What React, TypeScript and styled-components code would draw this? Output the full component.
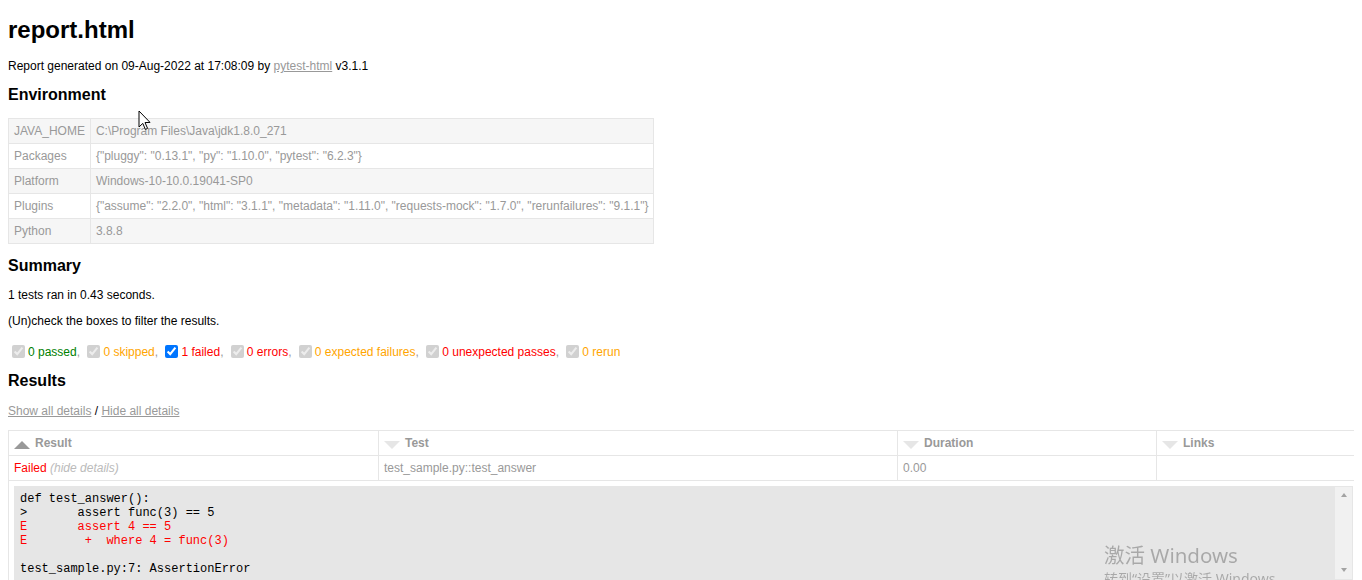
import React from 'react';
import styled, { createGlobalStyle } from 'styled-components';

const GlobalStyle = createGlobalStyle`
  html, body { background: #ffffff; }
  body {
    margin: 0 8px 8px 8px;
    font-family: "Liberation Sans", Arial, Helvetica, sans-serif;
    font-size: 12px;
    min-width: 800px;
    color: #999;
  }
`;

const Title = styled.h1`
  font-size: 24px;
  font-weight: bold;
  color: black;
  margin: 16px 0 15px 0;
`;

const SectionTitle = styled.h2<{ $tight?: boolean }>`
  font-size: 16px;
  font-weight: bold;
  color: black;
  margin: ${(p) => (p.$tight ? '11.3px' : '13.3px')} 0 13.3px 0;
`;

const Para = styled.p`
  color: black;
  margin: 12px 0;
`;

const Link = styled.a`
  color: #999;
  text-decoration: underline;
`;

const EnvTable = styled.table`
  border-collapse: collapse;
  font-size: 12px;
`;

const EnvRow = styled.tr<{ $shaded: boolean }>`
  background-color: ${(p) => (p.$shaded ? '#f6f6f6' : 'transparent')};
`;

const EnvCell = styled.td`
  padding: 5px;
  border: 1px solid #e6e6e6;
  color: #999;
`;

const FilterRow = styled.div`
  padding-top: 2px;
`;

const FilterBox = styled.input`
  margin: 3px 3px 3px 4px;
  width: 13px;
  height: 13px;
  vertical-align: -2px;
`;

const Outcome = styled.span<{ $tone: 'green' | 'orange' | 'red' }>`
  color: ${(p) => p.$tone};
`;

const ResultsTable = styled.table`
  border-collapse: collapse;
  border: 1px solid #e6e6e6;
  color: #999;
  font-size: 12px;
  width: 1350px;
  table-layout: fixed;
`;

const HeadCell = styled.th`
  padding: 5px;
  border: 1px solid #e6e6e6;
  text-align: left;
  font-weight: bold;
  cursor: pointer;
`;

const SortIcon = styled.div<{ $active: boolean }>`
  float: left;
  margin-right: 5px;
  margin-top: 5px;
  width: 0;
  height: 0;
  border-left: 8px solid transparent;
  border-right: 8px solid transparent;
  ${(p) =>
    p.$active ? 'border-bottom: 8px solid #999;' : 'border-top: 8px solid #e6e6e6;'}
`;

const Cell = styled.td`
  padding: 5px;
  border: 1px solid #e6e6e6;
  text-align: left;
  vertical-align: top;
`;

const FailedText = styled.span`
  color: red;
`;

const Collapser = styled.span`
  color: #bbb;
  font-style: italic;
  cursor: pointer;
`;

const LogFrame = styled.div`
  position: relative;
`;

const Log = styled.div`
  background-color: #e6e6e6;
  border: 1px solid #e6e6e6;
  color: black;
  display: block;
  font-family: "Liberation Mono", "Courier New", Courier, monospace;
  font-size: 12px;
  height: 82px;
  overflow-y: scroll;
  padding: 5px 22px 5px 5px;
  white-space: pre-wrap;
`;

const ScrollBar = styled.div`
  position: absolute;
  top: 1px;
  right: 1px;
  bottom: 1px;
  width: 17px;
  background: #f1f1f1;
  display: flex;
  flex-direction: column;
  justify-content: space-between;
  align-items: center;
  pointer-events: none;
`;

const ScrollButton = styled.div`
  height: 17px;
  width: 17px;
  display: flex;
  align-items: center;
  justify-content: center;
`;

const Arrow = styled.div<{ $up: boolean }>`
  width: 0;
  height: 0;
  border-left: 3.5px solid transparent;
  border-right: 3.5px solid transparent;
  ${(p) =>
    p.$up ? 'border-bottom: 4px solid #a3a3a3;' : 'border-top: 4px solid #a3a3a3;'}
`;

const ErrorLine = styled.span`
  color: red;
`;

const Cursor = styled.svg`
  position: absolute;
  left: 138px;
  top: 110px;
  pointer-events: none;
`;

const Watermark = styled.div`
  position: fixed;
  left: 1104px;
  top: 543px;
  color: rgba(0, 0, 0, 0.27);
  font-family: "Noto Sans", "Noto Sans CJK SC", sans-serif;
  pointer-events: none;
  line-height: 1.2;
`;

const WatermarkMain = styled.div`
  font-size: 20.5px;
`;

const WatermarkSub = styled.div`
  font-size: 14px;
  margin-top: 3px;
`;

const envRows: [string, string][] = [
  ['JAVA_HOME', 'C:\\Program Files\\Java\\jdk1.8.0_271'],
  ['Packages', '{"pluggy": "0.13.1", "py": "1.10.0", "pytest": "6.2.3"}'],
  ['Platform', 'Windows-10-10.0.19041-SP0'],
  [
    'Plugins',
    '{"assume": "2.2.0", "html": "3.1.1", "metadata": "1.11.0", "requests-mock": "1.7.0", "rerunfailures": "9.1.1"}',
  ],
  ['Python', '3.8.8'],
];

type Tone = 'green' | 'orange' | 'red';
const filters: { label: string; tone: Tone; enabled: boolean }[] = [
  { label: '0 passed', tone: 'green', enabled: false },
  { label: '0 skipped', tone: 'orange', enabled: false },
  { label: '1 failed', tone: 'red', enabled: true },
  { label: '0 errors', tone: 'red', enabled: false },
  { label: '0 expected failures', tone: 'orange', enabled: false },
  { label: '0 unexpected passes', tone: 'red', enabled: false },
  { label: '0 rerun', tone: 'orange', enabled: false },
];

const columns: { name: string; width: number; active: boolean }[] = [
  { name: 'Result', width: 370, active: true },
  { name: 'Test', width: 519, active: false },
  { name: 'Duration', width: 259, active: false },
  { name: 'Links', width: 202, active: false },
];

export default function App() {
  return (
    <>
      <GlobalStyle />
      <Title>report.html</Title>
      <Para>
        Report generated on 09-Aug-2022 at 17:08:09 by <Link href="#">pytest-html</Link> v3.1.1
      </Para>
      <SectionTitle>Environment</SectionTitle>
      <EnvTable>
        <tbody>
          {envRows.map(([k, v], i) => (
            <EnvRow key={k} $shaded={i % 2 === 0}>
              <EnvCell>{k}</EnvCell>
              <EnvCell>{v}</EnvCell>
            </EnvRow>
          ))}
        </tbody>
      </EnvTable>
      <SectionTitle>Summary</SectionTitle>
      <Para>1 tests ran in 0.43 seconds. </Para>
      <Para>(Un)check the boxes to filter the results.</Para>
      <FilterRow>
        {filters.map((f, i) => (
          <React.Fragment key={f.label}>
            <FilterBox type="checkbox" defaultChecked disabled={!f.enabled} />
            <Outcome $tone={f.tone}>{f.label}</Outcome>
            {i < filters.length - 1 ? ', ' : ''}
          </React.Fragment>
        ))}
      </FilterRow>
      <SectionTitle $tight>Results</SectionTitle>
      <Para>
        <Link href="#">Show all details</Link>&nbsp;/&nbsp;<Link href="#">Hide all details</Link>
      </Para>
      <ResultsTable>
        <colgroup>
          {columns.map((c) => (
            <col key={c.name} style={{ width: c.width }} />
          ))}
        </colgroup>
        <thead>
          <tr>
            {columns.map((c) => (
              <HeadCell key={c.name}>
                <SortIcon $active={c.active} />
                {c.name}
              </HeadCell>
            ))}
          </tr>
        </thead>
        <tbody>
          <tr>
            <Cell>
              <FailedText>Failed</FailedText>
              <Collapser> (hide details)</Collapser>
            </Cell>
            <Cell>test_sample.py::test_answer</Cell>
            <Cell>0.00</Cell>
            <Cell></Cell>
          </tr>
          <tr>
            <Cell colSpan={4}>
              <LogFrame>
                <Log>
                  {'def test_answer():\n>       assert func(3) == 5\n'}
                  <ErrorLine>{'E       assert 4 == 5'}</ErrorLine>
                  {'\n'}
                  <ErrorLine>{'E        +  where 4 = func(3)'}</ErrorLine>
                  {'\n\ntest_sample.py:7: AssertionError'}
                </Log>
                <ScrollBar>
                  <ScrollButton>
                    <Arrow $up />
                  </ScrollButton>
                  <ScrollButton>
                    <Arrow $up={false} />
                  </ScrollButton>
                </ScrollBar>
              </LogFrame>
            </Cell>
          </tr>
        </tbody>
      </ResultsTable>
      <Cursor width="13" height="21" viewBox="0 0 13 21">
        <path
          d="M1 1 L1 17 L4.8 13.4 L7.4 19.4 L9.6 18.4 L7 12.6 L12 12.4 Z"
          fill="#fff"
          stroke="#000"
          strokeWidth="1"
          strokeLinejoin="round"
        />
      </Cursor>
      <Watermark>
        <WatermarkMain>激活 Windows</WatermarkMain>
        <WatermarkSub>转到“设置”以激活 Windows。</WatermarkSub>
      </Watermark>
    </>
  );
}
